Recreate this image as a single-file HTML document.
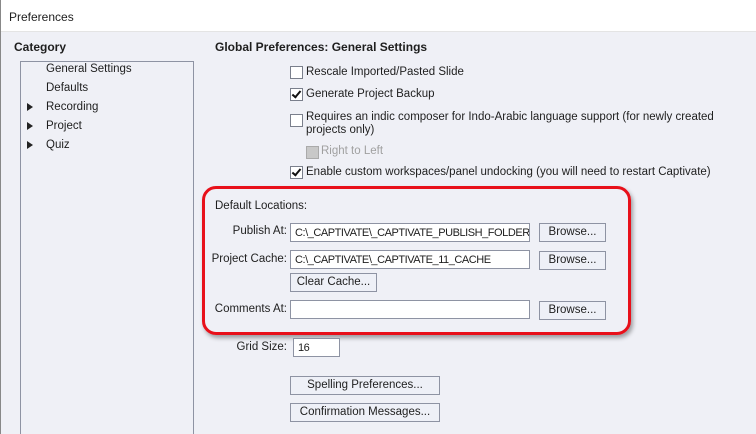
<!DOCTYPE html><html><head><style>
html,body{margin:0;width:756px;height:434px;overflow:hidden}
body{background:#eff0f6;font-family:"Liberation Sans",Tahoma,sans-serif;font-size:11.5px;color:#1e1e1e;position:relative}
.a{position:absolute;white-space:nowrap}
.t{position:absolute;left:0;top:0;width:756px;height:31px;background:#fff;border-bottom:1px solid #e4e4e4}
.b{font-weight:bold;font-size:12px}
.cb{position:absolute;width:11px;height:11px;border:1px solid #7a7f8c;background:#fff}
.ck::after{content:"";position:absolute;left:3px;top:0px;width:3px;height:7px;border:solid #111;border-width:0 2px 2px 0;transform:rotate(40deg)}
.in{position:absolute;background:#fff;border:1px solid #8e93a3;box-sizing:border-box;padding:2px 4px;height:19px;line-height:14px;font-size:11px;letter-spacing:-0.45px;overflow:hidden}
.bt{position:absolute;background:#eef0f7;border:1px solid #8e93a3;box-sizing:border-box;text-align:center;height:19px;line-height:16px}
.tri{position:absolute;left:27px;width:0;height:0;border-left:6px solid #222;border-top:4px solid transparent;border-bottom:4px solid transparent}
</style></head><body>
<div class="t"></div>
<div style="position:absolute;left:0;top:0;width:1px;height:434px;background:#888"></div>
<div class="a" style="left:9px;top:10px;font-size:12px">Preferences</div>
<div class="a b" style="left:14px;top:40px">Category</div>
<div style="position:absolute;left:20px;top:61px;width:172px;height:380px;border:1px solid #8e93a3"></div>
<div class="a" style="left:46px;top:63px">General Settings</div>
<div class="a" style="left:46px;top:82px">Defaults</div>
<div class="tri" style="top:103px"></div><div class="a" style="left:46px;top:101px">Recording</div>
<div class="tri" style="top:122px"></div><div class="a" style="left:46px;top:120px">Project</div>
<div class="tri" style="top:141px"></div><div class="a" style="left:46px;top:139px">Quiz</div>
<div class="a b" style="left:215px;top:40px">Global Preferences: General Settings</div>
<div class="cb" style="left:290px;top:66px"></div><div class="a" style="left:306px;top:66px">Rescale Imported/Pasted Slide</div>
<div class="cb ck" style="left:290px;top:88px"></div><div class="a" style="left:306px;top:88px">Generate Project Backup</div>
<div class="cb" style="left:290px;top:114px"></div><div class="a" style="left:306px;top:111px;line-height:13px">Requires an indic composer for Indo-Arabic language support (for newly created<br>projects only)</div>
<div class="cb" style="left:306px;top:146px;background:#c8c8c8;border-color:#aaa"></div><div class="a" style="left:321px;top:145px;color:#a0a0a0">Right to Left</div>
<div class="cb ck" style="left:290px;top:166px"></div><div class="a" style="left:306px;top:166px">Enable custom workspaces/panel undocking (you will need to restart Captivate)</div>
<div style="position:absolute;left:202px;top:186px;width:423px;height:143px;border:3px solid #e8101a;border-radius:14px;box-shadow:2px 3px 4px rgba(0,0,0,.35)"></div>
<div class="a" style="left:215px;top:200px">Default Locations:</div>
<div class="a" style="right:469px;top:225px">Publish At:</div>
<div class="in" style="left:290px;top:223px;width:240px">C:\_CAPTIVATE\_CAPTIVATE_PUBLISH_FOLDER</div>
<div class="bt" style="left:539px;top:223px;width:67px">Browse...</div>
<div class="a" style="right:469px;top:253px">Project Cache:</div>
<div class="in" style="left:290px;top:250px;width:240px">C:\_CAPTIVATE\_CAPTIVATE_11_CACHE</div>
<div class="bt" style="left:539px;top:251px;width:67px">Browse...</div>
<div class="bt" style="left:290px;top:273px;width:87px">Clear Cache...</div>
<div class="a" style="right:469px;top:303px">Comments At:</div>
<div class="in" style="left:290px;top:300px;width:240px"></div>
<div class="bt" style="left:539px;top:301px;width:67px">Browse...</div>
<div class="a" style="right:469px;top:341px">Grid Size:</div>
<div class="in" style="left:293px;top:338px;width:47px">16</div>
<div class="bt" style="left:290px;top:376px;width:150px">Spelling Preferences...</div>
<div class="bt" style="left:290px;top:403px;width:150px">Confirmation Messages...</div>
</body></html>
